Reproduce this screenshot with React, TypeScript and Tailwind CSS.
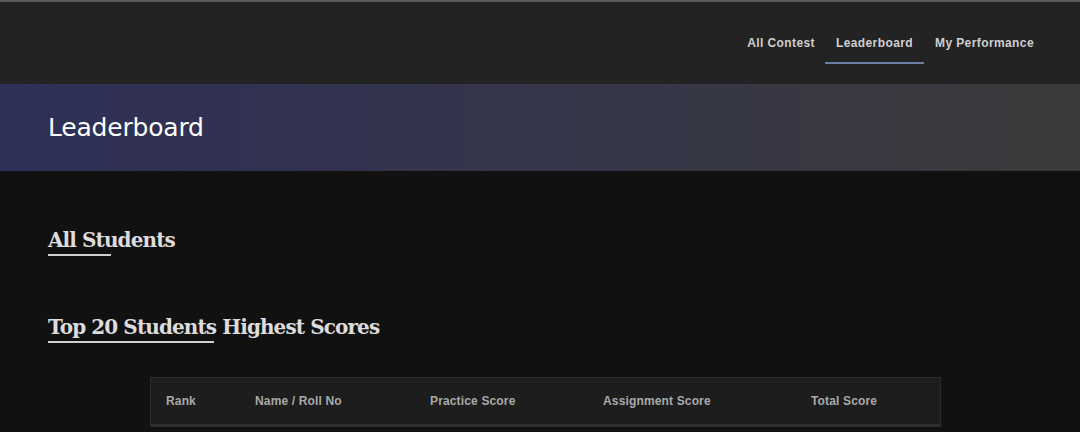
import React from "react";

export default function App() {
  const cols = [
    { label: "Rank", w: "w-[89px]" },
    { label: "Name / Roll No", w: "w-[175px]" },
    { label: "Practice Score", w: "w-[173px]" },
    { label: "Assignment Score", w: "w-[208px]" },
    { label: "Total Score", w: "flex-1" },
  ];
  return (
    <div className="min-h-[432px] w-full bg-[#111111] font-['Liberation_Sans',Arial,sans-serif]">
      <header className="h-[84px] bg-[#232323] border-t-2 border-[#5a5a5a] flex items-center justify-end pr-[35px]">
        <nav className="flex items-center gap-0 text-[12px] font-bold tracking-[0.4px] text-[#cfcfcf]">
          <a className="px-[10px] py-[12px]">All Contest</a>
          <a className="px-[11px] py-[12px] relative">
            Leaderboard
            <span className="absolute left-0 right-0 bottom-0 h-[2px] bg-[#6a7ea6]"></span>
          </a>
          <a className="px-[11px] py-[12px]">My Performance</a>
        </nav>
      </header>
      <section className="h-[87px] bg-gradient-to-r from-[#2e2f57] via-[#35354a] to-[#3b3b3b] flex items-center px-[48px]">
        <h1 className="text-[25px] text-white font-['DejaVu_Sans',sans-serif] font-normal tracking-[-0.2px]">Leaderboard</h1>
      </section>
      <main className="px-[48px] pt-[55px]">
        <h2 className="inline-block relative text-[20px] font-bold text-[#dcdcdc] font-['DejaVu_Serif',serif] leading-[28px] tracking-[-0.9px]">
          All Students
          <span className="absolute left-0 w-1/2 bottom-[-2px] h-[2px] bg-[#cfcfcf]"></span>
        </h2>
        <div className="h-[59px]"></div>
        <h2 className="inline-block relative text-[20px] font-bold text-[#dcdcdc] font-['DejaVu_Serif',serif] leading-[28px] tracking-[-0.9px]">
          Top 20 Students Highest Scores
          <span className="absolute left-0 w-1/2 bottom-[-2px] h-[2px] bg-[#cfcfcf]"></span>
        </h2>
        <div className="ml-[102px] mt-[36px] w-[791px] bg-[#1d1d1d] border border-[#2c2c2c]">
          <div className="flex h-[48px] items-center pl-[15px] border-b-2 border-[#2c2c2c] text-[12px] font-bold tracking-[0.15px] text-[#a9a9a9]">
            {cols.map((c) => (
              <div key={c.label} className={c.w}>{c.label}</div>
            ))}
          </div>
        </div>
      </main>
    </div>
  );
}
